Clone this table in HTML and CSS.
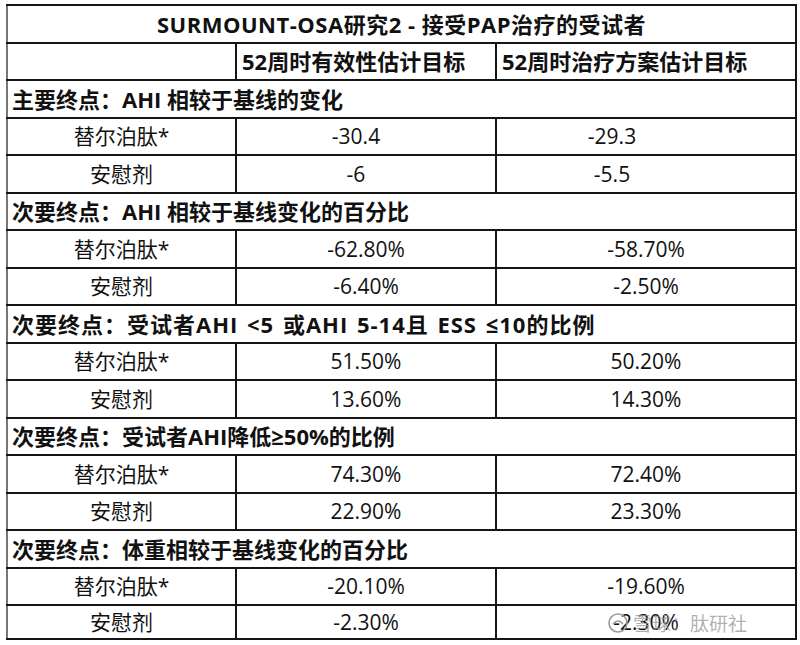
FILE: index.html
```html
<!DOCTYPE html>
<html lang="zh">
<head>
<meta charset="utf-8">
<link rel="stylesheet" href="styles.css">
</head>
<body>
<div class="page">
<table class="grid">
<colgroup><col class="c1"><col class="c2"><col class="c3"></colgroup>
<tr><th colspan="3" class="title">SURMOUNT-OSA研究2 - 接受PAP治疗的受试者</th></tr>
<tr><th></th><th class="hd">52周时有效性估计目标</th><th class="hd">52周时治疗方案估计目标</th></tr>
<tr><td colspan="3" class="sec">主要终点：AHI 相较于基线的变化</td></tr>
<tr class="s1"><td>替尔泊肽*</td><td>-30.4</td><td>-29.3</td></tr>
<tr class="s1"><td>安慰剂</td><td>-6</td><td>-5.5</td></tr>
<tr><td colspan="3" class="sec">次要终点：AHI 相较于基线变化的百分比</td></tr>
<tr><td>替尔泊肽*</td><td>-62.80%</td><td>-58.70%</td></tr>
<tr><td>安慰剂</td><td>-6.40%</td><td>-2.50%</td></tr>
<tr><td colspan="3" class="sec wide">次要终点：受试者AHI &lt;5 或AHI 5-14且 ESS ≤10的比例</td></tr>
<tr><td>替尔泊肽*</td><td>51.50%</td><td>50.20%</td></tr>
<tr><td>安慰剂</td><td>13.60%</td><td>14.30%</td></tr>
<tr><td colspan="3" class="sec">次要终点：受试者AHI降低≥50%的比例</td></tr>
<tr><td>替尔泊肽*</td><td>74.30%</td><td>72.40%</td></tr>
<tr><td>安慰剂</td><td>22.90%</td><td>23.30%</td></tr>
<tr><td colspan="3" class="sec">次要终点：体重相较于基线变化的百分比</td></tr>
<tr><td>替尔泊肽*</td><td>-20.10%</td><td>-19.60%</td></tr>
<tr class="last"><td>安慰剂</td><td>-2.30%</td><td>-2.30%</td></tr>
</table>
<div class="mark">
<svg class="mark-icon" width="24" height="22" viewBox="0 0 24 22"><circle cx="11" cy="11" r="9" fill="none" stroke="#9a9a9a" stroke-width="1.6"/><path d="M6 12 q5 -6 10 0" fill="none" stroke="#9a9a9a" stroke-width="1.6"/></svg>
<span>雪球：肽研社</span>
</div>
</div>
</body>
</html>
```
FILE: styles.css
```css
html, body {
  margin: 0;
  padding: 0;
  background: #ffffff;
}
.page {
  position: relative;
  width: 800px;
  height: 645px;
  padding-top: 4px;
  padding-left: 6px;
  box-sizing: border-box;
}
.grid {
  border-collapse: collapse;
  table-layout: fixed;
  width: 789px;
  font-family: "Open Sans", "Noto Sans CJK SC", sans-serif;
  font-size: 21px;
  color: #111;
}
.c1 { width: 229px; }
.c2 { width: 260px; }
.c3 { width: 300px; }
.grid th, .grid td {
  border: 2px solid #151515;
  height: 35.5px;
  padding: 0;
  text-align: center;
  vertical-align: middle;
  font-weight: 400;
  line-height: 24px;
  white-space: nowrap;
}
.grid tr > :first-child {
  border-left-color: #777;
}
.grid .title {
  font-weight: 700;
  font-size: 22px;
  letter-spacing: 0.5px;
}
.grid .hd {
  font-weight: 700;
  font-size: 22px;
  text-align: left;
  padding-left: 5px;
}
.grid .sec {
  font-weight: 700;
  font-size: 22px;
  text-align: left;
  padding-left: 4px;
}
.grid .wide {
  word-spacing: 2px;
  letter-spacing: 1px;
}
.grid .s1 td:nth-child(2) {
  padding-right: 20px;
}
.grid .s1 td:nth-child(3) {
  padding-right: 68px;
}
.grid .last td {
  height: 31.5px;
}
.mark {
  position: absolute;
  left: 607px;
  top: 609px;
  display: flex;
  align-items: center;
  gap: 2px;
  font-family: "Noto Sans CJK SC", sans-serif;
  font-size: 19px;
  color: rgba(150, 150, 150, 0.75);
}
.mark-icon {
  display: block;
}
```
